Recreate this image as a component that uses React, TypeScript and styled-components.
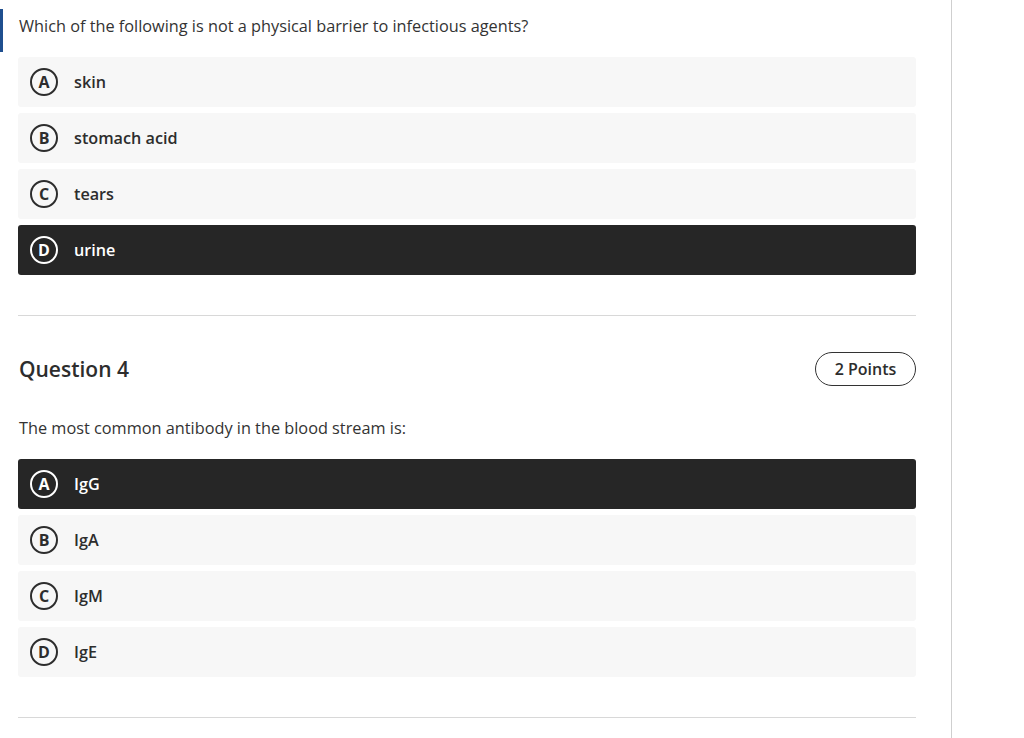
import React from "react";
import styled, { createGlobalStyle } from "styled-components";

const Global = createGlobalStyle`
  html, body { margin: 0; padding: 0; background: #ffffff; }
  body { font-family: "Open Sans", "Noto Sans", sans-serif; color: #2d2d2d; }
  * { box-sizing: border-box; }
`;

const Page = styled.div`
  display: flex;
  height: 738px;
  overflow: hidden;
`;

const Main = styled.main`
  width: 952px;
  flex: none;
  border-right: 1px solid #cfcfcf;
  padding: 14px 35px 0 18px;
  display: flex;
  flex-direction: column;
`;

const Sidebar = styled.aside`
  flex: 1;
`;

const Prompt = styled.p<{ $focused?: boolean }>`
  position: relative;
  margin: 0 0 19px 1px;
  font-size: 16.3px;
  line-height: 24px;
  font-weight: 400;
  color: #333333;

  ${(p) =>
    p.$focused &&
    `
    &::before {
      content: "";
      position: absolute;
      left: -19px;
      top: -5px;
      width: 3px;
      height: 43px;
      background: #1f4f8f;
    }
  `}
`;

const OptionList = styled.div`
  display: flex;
  flex-direction: column;
  gap: 6px;
`;

const Option = styled.div<{ $selected?: boolean }>`
  height: 50px;
  display: flex;
  align-items: center;
  padding: 0 12px;
  border-radius: 3px;
  background: ${(p) => (p.$selected ? "#262626" : "#f7f7f7")};
  color: ${(p) => (p.$selected ? "#ffffff" : "#2d2d2d")};
`;

const Badge = styled.span`
  display: inline-flex;
  align-items: center;
  justify-content: center;
  width: 28px;
  min-width: 28px;
  height: 28px;
  margin-right: 16px;
  border-radius: 14px;
  border: 2px solid currentColor;
  font-size: 16px;
  font-weight: 700;
  line-height: 1;
`;

const OptionLabel = styled.span`
  font-size: 16.2px;
  font-weight: 600;
  line-height: 24px;
`;

const Divider = styled.hr`
  margin: 40px 0 0 0;
  border: none;
  border-top: 1px solid #d8d8d8;
  height: 0;
`;

const QuestionHeader = styled.div`
  margin-top: 36px;
  height: 34px;
  display: flex;
  align-items: center;
  justify-content: space-between;
  margin-bottom: 30px;
`;

const QuestionTitle = styled.h2`
  margin: 0 0 0 1px;
  font-size: 21px;
  line-height: 28px;
  font-weight: 600;
  color: #2d2d2d;
`;

const Points = styled.span`
  height: 34px;
  width: 101px;
  border: 1px solid #333333;
  border-radius: 17px;
  display: flex;
  align-items: center;
  justify-content: center;
  font-size: 16px;
  font-weight: 600;
  color: #2d2d2d;
`;

type Q = { letter: string; label: string; selected?: boolean };

const OptionsBlock = ({ items }: { items: Q[] }) => (
  <OptionList>
    {items.map((o) => (
      <Option key={o.letter} $selected={o.selected}>
        <Badge>{o.letter}</Badge>
        <OptionLabel>{o.label}</OptionLabel>
      </Option>
    ))}
  </OptionList>
);

export default function App() {
  return (
    <>
      <Global />
      <Page>
        <Main>
          <Prompt $focused>Which of the following is not a physical barrier to infectious agents?</Prompt>
          <OptionsBlock
            items={[
              { letter: "A", label: "skin" },
              { letter: "B", label: "stomach acid" },
              { letter: "C", label: "tears" },
              { letter: "D", label: "urine", selected: true },
            ]}
          />
          <Divider />
          <QuestionHeader>
            <QuestionTitle>Question 4</QuestionTitle>
            <Points>2 Points</Points>
          </QuestionHeader>
          <Prompt>The most common antibody in the blood stream is:</Prompt>
          <OptionsBlock
            items={[
              { letter: "A", label: "IgG", selected: true },
              { letter: "B", label: "IgA" },
              { letter: "C", label: "IgM" },
              { letter: "D", label: "IgE" },
            ]}
          />
          <Divider />
        </Main>
        <Sidebar />
      </Page>
    </>
  );
}
